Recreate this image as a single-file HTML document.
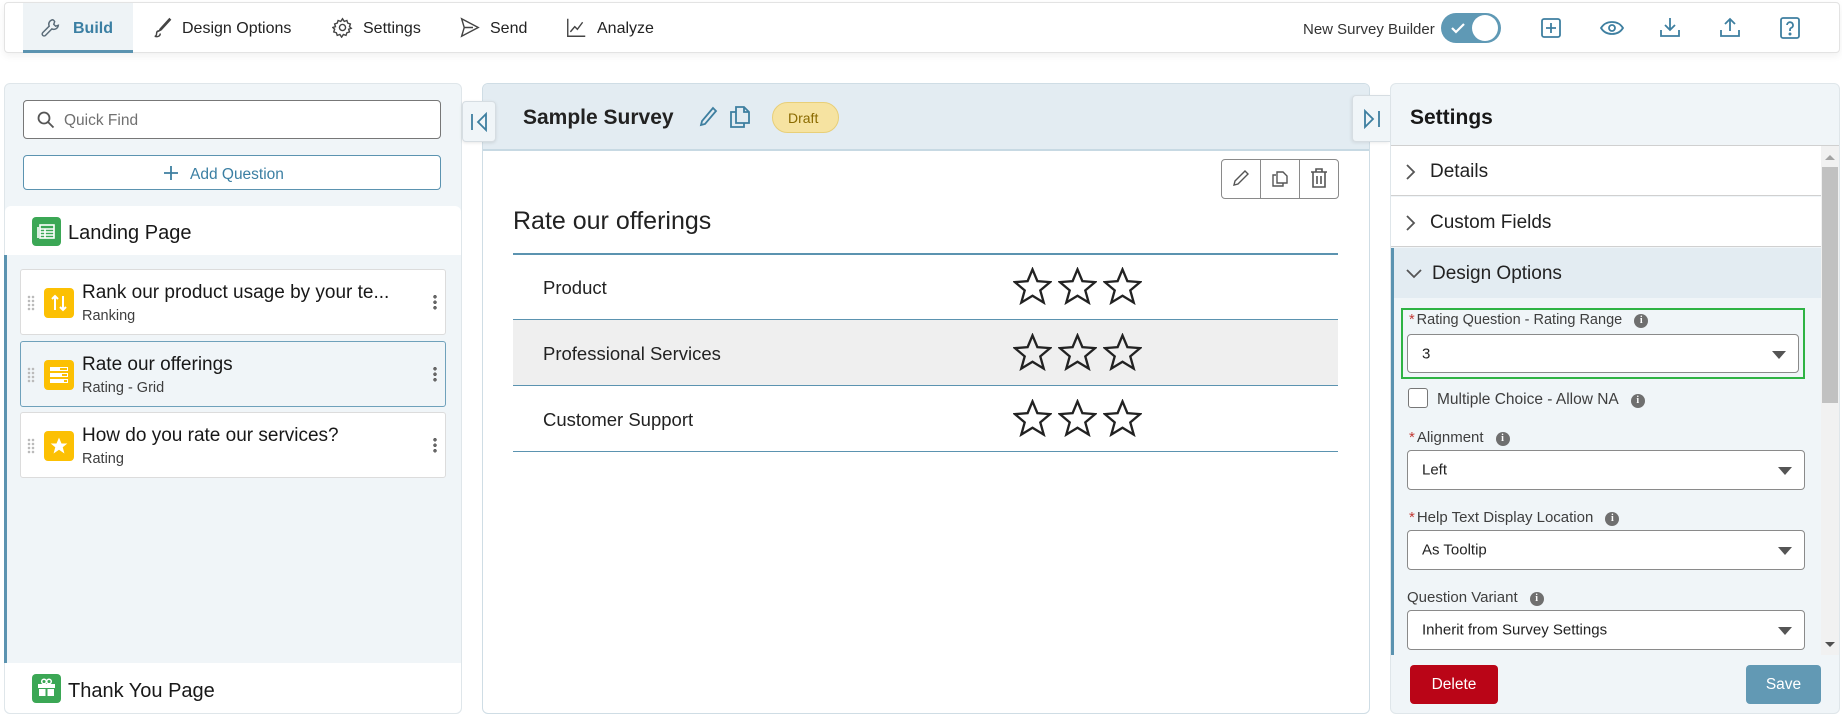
<!DOCTYPE html>
<html><head><meta charset="utf-8">
<style>
*{box-sizing:border-box;margin:0;padding:0}
body{width:1842px;height:717px;background:#fff;font-family:"Liberation Sans",sans-serif;color:#181818;position:relative;overflow:hidden}
.a{position:absolute}
.t{position:absolute;white-space:nowrap}
svg{display:block}
.sel{position:absolute;background:#fff;border:1px solid #8a8a8a;border-radius:4px;font-size:15px;color:#222}
.sel span{position:absolute;left:14px;top:50%;transform:translateY(-50%)}
.sel i{position:absolute;right:12px;top:50%;margin-top:-3px;width:0;height:0;border-left:7px solid transparent;border-right:7px solid transparent;border-top:8px solid #555}
.info{display:inline-block;width:14px;height:14px;border-radius:50%;background:#6f6f6f;color:#fff;font-size:10px;font-weight:bold;text-align:center;line-height:14px;font-family:"Liberation Serif",serif;vertical-align:1px;margin-left:12px}
.lbl{position:absolute;font-size:14.5px;color:#3e3e3e;white-space:nowrap}
.lbl b{color:#c23934;font-weight:normal;margin-right:2px}
.card{position:absolute;left:20px;width:426px;background:#fff;border:1px solid #dcdcdc;border-radius:3px}
.qi{position:absolute;left:23px;top:18px;width:30px;height:30px;border-radius:4px;background:#fcc003}
.qt{position:absolute;left:61px;top:12px;font-size:19px;color:#181818;white-space:nowrap}
.qs{position:absolute;left:61px;top:38px;font-size:14.5px;color:#3e3e3e}
.grip{position:absolute;left:6px;top:25px;width:8px;height:16px;background-image:radial-gradient(circle,#bbb 1.2px,transparent 1.4px);background-size:4px 4px}
.kebab{position:absolute;right:8px;top:24px;width:4px;height:16px;background-image:radial-gradient(circle,#666 1.7px,transparent 1.9px);background-size:4px 5.5px}
.row{position:absolute;left:513px;width:825px;height:66px;border-bottom:1.5px solid #5b93b0}
.row .t{left:30px;top:23px;font-size:18.5px;color:#222}
.stars{position:absolute;left:500px;top:13px;display:flex;gap:6px}
.acc{position:absolute;left:1391px;width:430px;height:50px;border-bottom:1px solid #d0d0d0;background:#fff}
.acc .t{left:39px;top:15px;font-size:19px;color:#222}
.acc svg{position:absolute;left:14px;top:17px}
</style></head><body>

<!-- toolbar -->
<div class="a" style="left:4px;top:2px;width:1836px;height:51px;border:1px solid #e3e3e3;border-radius:4px;box-shadow:0 3px 8px rgba(0,0,0,0.06);background:#fff"></div>
<div class="a" style="left:23px;top:3px;width:110px;height:50px;background:#eef3f6;border-bottom:3px solid #5b93b0"></div>
<svg class="a" style="left:40px;top:17px" width="22" height="22" viewBox="0 0 24 24" fill="none" stroke="#5a6b78" stroke-width="1.6"><path d="M14 3a5 5 0 0 0-4 7L3 17a2 2 0 0 0 3 3l7-7a5 5 0 0 0 7-4l-3 1-2-2 1-3a5 5 0 0 0-2-2z"/></svg>
<div class="t" style="left:73px;top:20px;font-size:16px;font-weight:bold;color:#3b7fa3">Build</div>
<svg class="a" style="left:152px;top:17px" width="22" height="22" viewBox="0 0 24 24" fill="none" stroke="#444" stroke-width="1.6"><path d="M20 3L10 14l-2 1 1-2L19 2z M8 15c-2 0-3 1-3 3s-1 3-2 3c3 1 6 0 6-3"/></svg>
<div class="t" style="left:182px;top:20px;font-size:16px;color:#222">Design Options</div>
<svg class="a" style="left:332px;top:17px" width="21" height="21" viewBox="0 0 24 24" fill="none" stroke="#444" stroke-width="1.6"><circle cx="12" cy="12" r="3.5"/><path d="M12 2l2 3 3-1 1 3 3 1-1 3 2 2-3 1 1 3-3 1-1 3-3-1-2 3-2-3-3 1-1-3-3-1 1-3-2-2 3-1-1-3 3-1 1-3 3 1z"/></svg>
<div class="t" style="left:363px;top:20px;font-size:16px;color:#222">Settings</div>
<svg class="a" style="left:459px;top:17px" width="21" height="21" viewBox="0 0 24 24" fill="none" stroke="#444" stroke-width="1.6"><path d="M3 2l19 10L3 22l3-10z M6 12h10"/></svg>
<div class="t" style="left:490px;top:20px;font-size:16px;color:#222">Send</div>
<svg class="a" style="left:566px;top:17px" width="21" height="21" viewBox="0 0 24 24" fill="none" stroke="#444" stroke-width="1.6"><path d="M2 2v20h20 M5 17l5-6 3 3 6-8"/></svg>
<div class="t" style="left:597px;top:20px;font-size:16px;color:#222">Analyze</div>

<div class="t" style="left:1303px;top:21px;font-size:15px;color:#333">New Survey Builder</div>
<div class="a" style="left:1441px;top:13px;width:60px;height:30px;border-radius:15px;background:#5f99b5"></div>
<div class="a" style="left:1472px;top:15px;width:26px;height:26px;border-radius:50%;background:#fff"></div>
<svg class="a" style="left:1450px;top:20px" width="16" height="16" viewBox="0 0 16 16" fill="none" stroke="#fff" stroke-width="2.2"><path d="M2 8l4 4 8-8"/></svg>
<svg class="a" style="left:1540px;top:17px" width="22" height="22" viewBox="0 0 22 22" fill="none" stroke="#3e7fa0" stroke-width="1.8"><rect x="2" y="2" width="18" height="18" rx="2"/><path d="M11 6v10M6 11h10"/></svg>
<svg class="a" style="left:1600px;top:19px" width="24" height="18" viewBox="0 0 24 18" fill="none" stroke="#3e7fa0" stroke-width="1.8"><path d="M1 9c5-8 17-8 22 0c-5 8-17 8-22 0z"/><circle cx="12" cy="9" r="3"/></svg>
<svg class="a" style="left:1659px;top:16px" width="22" height="22" viewBox="0 0 22 22" fill="none" stroke="#3e7fa0" stroke-width="1.8"><path d="M11 2v12M6 9l5 5 5-5M2 14v6h18v-6"/></svg>
<svg class="a" style="left:1719px;top:16px" width="22" height="22" viewBox="0 0 22 22" fill="none" stroke="#3e7fa0" stroke-width="1.8"><path d="M11 15V3M6 8l5-5 5 5M2 14v6h18v-6"/></svg>
<svg class="a" style="left:1780px;top:17px" width="20" height="22" viewBox="0 0 20 22" fill="none" stroke="#3e7fa0" stroke-width="1.8"><rect x="1" y="1" width="18" height="20" rx="2"/><path d="M7 8a3 3 0 1 1 4 3c-1 .5-1 1-1 3"/><circle cx="10" cy="17" r=".6" fill="#3e7fa0"/></svg>

<!-- left panel -->
<div class="a" style="left:4px;top:83px;width:458px;height:631px;background:#f0f5f8;border:1px solid #dfe6ea;border-radius:6px;overflow:hidden"></div>
<div class="a" style="left:23px;top:100px;width:418px;height:39px;background:#fff;border:1px solid #777;border-radius:4px"></div>
<svg class="a" style="left:37px;top:111px" width="18" height="18" viewBox="0 0 18 18" fill="none" stroke="#555" stroke-width="1.8"><circle cx="7" cy="7" r="5.5"/><path d="M11 11l5.5 5.5"/></svg>
<div class="t" style="left:64px;top:112px;font-size:15.5px;color:#707070">Quick Find</div>
<div class="a" style="left:23px;top:155px;width:418px;height:35px;background:#fff;border:1px solid #5b93b0;border-radius:4px"></div>
<svg class="a" style="left:163px;top:165px" width="16" height="16" viewBox="0 0 16 16" stroke="#3e7fa0" stroke-width="1.8"><path d="M8 1v14M1 8h14"/></svg>
<div class="t" style="left:190px;top:166px;font-size:15.5px;color:#3b7fa3">Add Question</div>
<div class="a" style="left:5px;top:206px;width:456px;height:49px;background:#fff;border-radius:6px 6px 0 0"></div>
<div class="a" style="left:32px;top:217px;width:29px;height:29px;background:#3ba755;border-radius:4px"></div>
<svg class="a" style="left:37px;top:222px" width="19" height="19" viewBox="0 0 19 19" fill="none" stroke="#fff" stroke-width="1.6"><rect x="3" y="3" width="14" height="13"/><path d="M3 7h14M3 10h14M3 13h14M8 7v9M1 5v11"/></svg>
<div class="t" style="left:68px;top:222px;font-size:20px;color:#181818">Landing Page</div>
<div class="a" style="left:4px;top:255px;width:3px;height:408px;background:#5b93b0"></div>

<div class="card" style="top:269px;height:66px"><div class="grip"></div><div class="qi"></div>
<svg class="a" style="left:29px;top:24px" width="18" height="18" viewBox="0 0 18 18" fill="none" stroke="#fff" stroke-width="2"><path d="M5 16V2M2 5l3-3 3 3M13 2v14M10 13l3 3 3-3"/></svg>
<div class="qt">Rank our product usage by your te...</div><div class="qs">Ranking</div><div class="kebab"></div></div>
<div class="card" style="top:341px;height:66px;background:#f0f5f8;border-color:#6fa1bb"><div class="grip"></div><div class="qi"></div>
<svg class="a" style="left:28px;top:24px" width="20" height="18" viewBox="0 0 20 18" fill="#fff"><rect x="1" y="1" width="18" height="4"/><rect x="1" y="7" width="18" height="4"/><rect x="1" y="13" width="18" height="4"/><rect x="11" y="2" width="7" height="2" fill="#fcc003"/><rect x="13" y="8" width="5" height="2" fill="#fcc003"/><rect x="15" y="14" width="3" height="2" fill="#fcc003"/></svg>
<div class="qt">Rate our offerings</div><div class="qs">Rating - Grid</div><div class="kebab"></div></div>
<div class="card" style="top:412px;height:66px"><div class="grip"></div><div class="qi"></div>
<svg class="a" style="left:28px;top:23px" width="20" height="20" viewBox="0 0 24 24" fill="#fff"><path d="M12 2l3 7h7l-5.5 4.5 2 7.5-6.5-4.5-6.5 4.5 2-7.5L2 9h7z"/></svg>
<div class="qt">How do you rate our services?</div><div class="qs">Rating</div><div class="kebab"></div></div>

<div class="a" style="left:5px;top:663px;width:456px;height:50px;background:#fff;border-radius:0 0 6px 6px"></div>
<div class="a" style="left:32px;top:674px;width:29px;height:29px;background:#3ba755;border-radius:4px"></div>
<svg class="a" style="left:36px;top:677px" width="21" height="22" viewBox="0 0 21 22" fill="#fff"><rect x="2" y="7" width="17" height="4"/><rect x="3" y="12" width="6.5" height="7"/><rect x="11.5" y="12" width="6.5" height="7"/><circle cx="8" cy="4.5" r="2.3" fill="none" stroke="#fff" stroke-width="1.5"/><circle cx="13" cy="4.5" r="2.3" fill="none" stroke="#fff" stroke-width="1.5"/></svg>
<div class="t" style="left:68px;top:680px;font-size:20px;color:#181818">Thank You Page</div>

<!-- center panel -->
<div class="a" style="left:482px;top:83px;width:888px;height:631px;background:#fff;border:1px solid #cfdde5;border-radius:6px;overflow:hidden">
  <div class="a" style="left:0;top:0;width:888px;height:67px;background:#e3ecf2;border-bottom:2px solid #c7d9e3"></div>
</div>
<div class="a" style="left:462px;top:101px;width:34px;height:41px;background:#f0f5f8;border:1px solid #d6dde2;border-radius:4px;box-shadow:0 1px 3px rgba(0,0,0,.1)"></div>
<svg class="a" style="left:469px;top:112px" width="20" height="20" viewBox="0 0 20 20" fill="none" stroke="#3e7fa0" stroke-width="1.8"><path d="M3 2v16M17 2l-8 8 8 8z"/></svg>
<div class="t" style="left:523px;top:106px;font-size:21px;font-weight:bold;color:#222">Sample Survey</div>
<svg class="a" style="left:698px;top:106px" width="20" height="22" viewBox="0 0 20 22" fill="none" stroke="#3e7fa0" stroke-width="1.8"><path d="M15 2l3 3L7 18l-4 1 1-4z"/></svg>
<svg class="a" style="left:729px;top:105px" width="22" height="24" viewBox="0 0 22 24" fill="none" stroke="#3e7fa0" stroke-width="1.8"><path d="M7 7H2v15h13v-4 M7 2h8l5 5v11H7z M15 2v5h5"/></svg>
<div class="a" style="left:772px;top:102px;width:67px;height:31px;background:#f6e3a1;border:1px solid #e8cf78;border-radius:16px"></div>
<div class="t" style="left:788px;top:110px;font-size:14px;color:#8a6a00">Draft</div>

<div class="a" style="left:1221px;top:159px;width:118px;height:40px;border:1px solid #8a8a8a;border-radius:4px;background:#fff"></div>
<div class="a" style="left:1260px;top:159px;width:1px;height:40px;background:#8a8a8a"></div>
<div class="a" style="left:1299px;top:159px;width:1px;height:40px;background:#8a8a8a"></div>
<svg class="a" style="left:1231px;top:169px" width="20" height="20" viewBox="0 0 20 20" fill="none" stroke="#555" stroke-width="1.4"><path d="M14 2l3 3L7 15l-4 1 1-4z"/></svg>
<svg class="a" style="left:1270px;top:169px" width="20" height="20" viewBox="0 0 20 20" fill="none" stroke="#555" stroke-width="1.4"><path d="M6 6H3v11h10v-3 M7 3h6l4 4v7H7z"/></svg>
<svg class="a" style="left:1310px;top:168px" width="18" height="20" viewBox="0 0 18 20" fill="none" stroke="#555" stroke-width="1.6"><path d="M1 4h16M6 4V1h6v3M3 4v15h12V4M7 8v8M11 8v8"/></svg>

<div class="t" style="left:513px;top:207px;font-size:25px;color:#222">Rate our offerings</div>
<div class="a" style="left:513px;top:253px;width:825px;height:1.5px;background:#5b93b0"></div>
<div class="row" style="top:254px"><div class="t">Product</div><div class="stars"></div></div>
<div class="row" style="top:320px;background:#efefef"><div class="t">Professional Services</div><div class="stars"></div></div>
<div class="row" style="top:386px"><div class="t">Customer Support</div><div class="stars"></div></div>

<!-- right panel -->
<div class="a" style="left:1390px;top:83px;width:450px;height:631px;background:#f0f5f8;border:1px solid #dfe6ea;border-radius:6px"></div>
<div class="a" style="left:1352px;top:95px;width:38px;height:47px;background:#f0f5f8;border:1px solid #d6dde2;border-right:none;border-radius:4px 0 0 4px;box-shadow:-1px 1px 3px rgba(0,0,0,.08)"></div>
<svg class="a" style="left:1362px;top:109px" width="20" height="20" viewBox="0 0 20 20" fill="none" stroke="#3e7fa0" stroke-width="1.8"><path d="M17 2v16M3 2l8 8-8 8z"/></svg>
<div class="t" style="left:1410px;top:106px;font-size:21px;font-weight:bold;color:#181818">Settings</div>
<div class="a" style="left:1391px;top:145px;width:448px;height:1px;background:#d0d0d0"></div>

<div class="acc" style="top:146px"><svg width="12" height="18" viewBox="0 0 12 18" fill="none" stroke="#555" stroke-width="1.8"><path d="M2 2l7 7-7 7"/></svg><div class="t">Details</div></div>
<div class="acc" style="top:197px"><svg width="12" height="18" viewBox="0 0 12 18" fill="none" stroke="#555" stroke-width="1.8"><path d="M2 2l7 7-7 7"/></svg><div class="t">Custom Fields</div></div>
<div class="acc" style="top:248px;background:#e3ecf2;border-left:3px solid #5b93b0;border-bottom:none"><svg style="left:11px;top:20px" width="18" height="12" viewBox="0 0 18 12" fill="none" stroke="#555" stroke-width="1.8"><path d="M2 2l7 7 7-7"/></svg><div class="t" style="left:38px">Design Options</div></div>
<div class="a" style="left:1391px;top:298px;width:3px;height:357px;background:#5b93b0"></div>

<!-- scrollbar -->
<div class="a" style="left:1821px;top:146px;width:18px;height:509px;background:#f1f1f1"></div>
<div class="a" style="left:1822px;top:167px;width:16px;height:236px;background:#c1c1c1"></div>
<div class="a" style="left:1825px;top:155px;border-left:5px solid transparent;border-right:5px solid transparent;border-bottom:5px solid #a3a3a3"></div>
<div class="a" style="left:1825px;top:642px;border-left:5px solid transparent;border-right:5px solid transparent;border-top:5px solid #505050"></div>

<div class="a" style="left:1401px;top:308px;width:404px;height:71px;border:2.5px solid #2fb344"></div>
<div class="lbl" style="left:1409px;top:312px"><b>*</b>Rating Question - Rating Range<span class="info">i</span></div>
<div class="sel" style="left:1407px;top:334px;width:392px;height:39px"><span>3</span><i></i></div>
<div class="a" style="left:1408px;top:388px;width:20px;height:20px;background:#fff;border:1px solid #777;border-radius:3px"></div>
<div class="lbl" style="left:1437px;top:391px;font-size:15.5px">Multiple Choice - Allow NA<span class="info">i</span></div>
<div class="lbl" style="left:1409px;top:429px;font-size:15px"><b>*</b>Alignment<span class="info">i</span></div>
<div class="sel" style="left:1407px;top:450px;width:398px;height:40px"><span>Left</span><i></i></div>
<div class="lbl" style="left:1409px;top:509px;font-size:15px"><b>*</b>Help Text Display Location<span class="info">i</span></div>
<div class="sel" style="left:1407px;top:530px;width:398px;height:40px"><span>As Tooltip</span><i></i></div>
<div class="lbl" style="left:1407px;top:589px;font-size:15px">Question Variant<span class="info">i</span></div>
<div class="sel" style="left:1407px;top:610px;width:398px;height:40px"><span>Inherit from Survey Settings</span><i></i></div>

<div class="a" style="left:1410px;top:665px;width:88px;height:39px;background:#ba0517;border-radius:4px;color:#fff;font-size:15.5px;text-align:center;line-height:39px">Delete</div>
<div class="a" style="left:1746px;top:665px;width:75px;height:39px;background:#6299b4;border-radius:4px;color:#fff;font-size:15.5px;text-align:center;line-height:39px">Save</div>

<script>
var s='<svg width="39" height="38" viewBox="0 0 40 38" fill="none" stroke="#222" stroke-width="2.4" stroke-linejoin="miter"><path d="M20 2l5 12 13 1-10 8.5 3.5 12.5L20 29 8.5 36 12 23.5 2 15l13-1z"/></svg>';
document.querySelectorAll('.stars').forEach(function(e){e.innerHTML=s+s+s;});
</script>
</body></html>
